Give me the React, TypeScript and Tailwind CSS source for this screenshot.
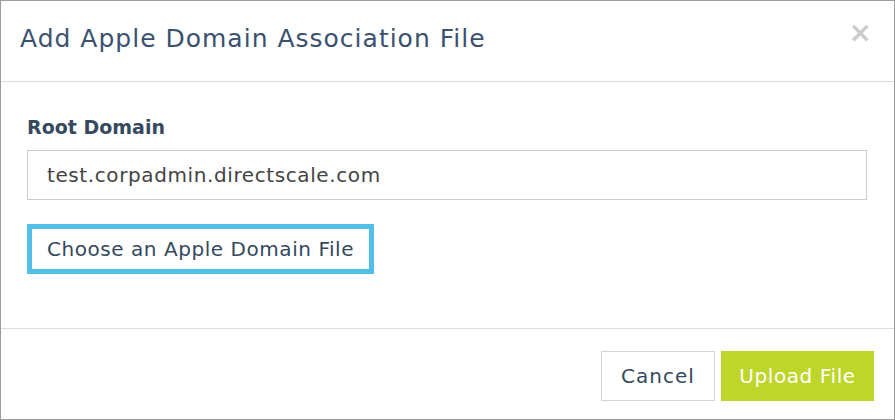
export default function App() {
  return (
    <div
      className="w-[895px] h-[420px] bg-white border border-[#9c9c9c] flex flex-col text-[#34495e]"
      style={{ fontFamily: '"DejaVu Sans", "Open Sans", sans-serif' }}
    >
      <div className="h-[81px] shrink-0 flex justify-between pl-[19px] pr-[22px] pt-[22px] border-b border-[#dcdcdc]">
        <h2 className="text-[25px] font-normal text-[#3b5170] leading-[32px] tracking-[1px]">
          Add Apple Domain Association File
        </h2>
        <span className="text-[28px] font-bold text-[#cccccc] leading-[20px]">×</span>
      </div>

      <div className="flex-1 flex flex-col pl-[26px] pr-[27px] pt-[33px]">
        <label className="text-[19px] font-bold text-[#34495e] leading-[24px]">Root Domain</label>
        <div className="mt-[11px] h-[50px] border border-[#cccccc] flex items-center pl-[19px] text-[20px] tracking-[0.6px] text-[#444444]">
          test.corpadmin.directscale.com
        </div>
        <div className="mt-[24px]">
          <button className="h-[50px] w-[347px] border-[5px] border-[#52c0e6] flex items-center pl-[15px] text-[20px] tracking-[0.55px] text-[#34495e]">
            Choose an Apple Domain File
          </button>
        </div>
      </div>

      <div className="h-[91px] shrink-0 border-t border-[#dcdcdc] flex items-center justify-end gap-[6px] pr-[20px] pt-[4px]">
        <button className="h-[50px] w-[114px] border border-[#d6d6d6] text-[20px] tracking-[1px] text-[#34495e] bg-white">
          Cancel
        </button>
        <button className="h-[50px] w-[153px] bg-[#bed62a] text-[20px] tracking-[0.6px] text-white">
          Upload File
        </button>
      </div>
    </div>
  );
}
